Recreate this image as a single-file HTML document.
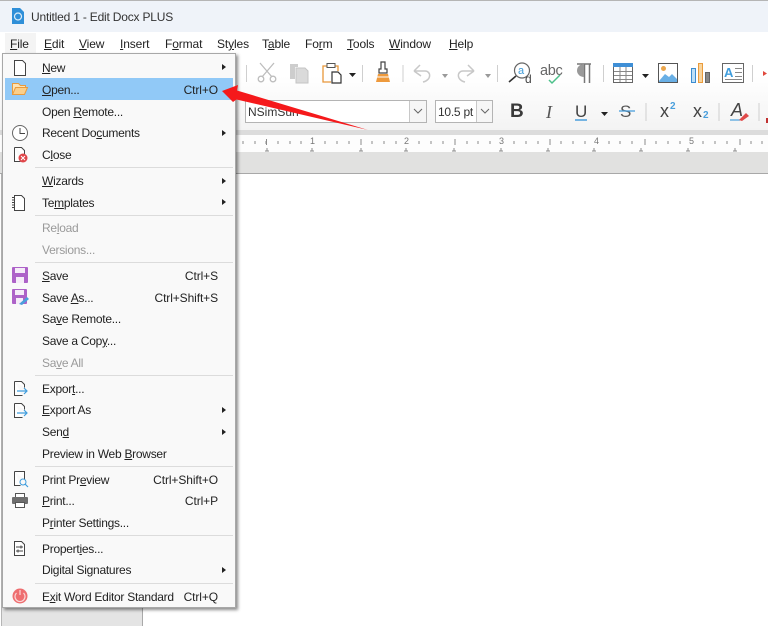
<!DOCTYPE html>
<html><head><meta charset="utf-8">
<style>
html,body{margin:0;padding:0;background:#fff}
body{width:768px;height:626px;position:relative;overflow:hidden;font-family:"Liberation Sans",sans-serif;font-size:12px;color:#222}
div,span.a{position:absolute;white-space:nowrap}
u{text-underline-offset:1px}
.m{top:37px;font-size:12px;line-height:14px;letter-spacing:-.12px;color:#222}
.i{left:42px;font-size:12px;line-height:14px;letter-spacing:-.27px;color:#222}
.s{right:550px;font-size:12px;line-height:14px;letter-spacing:-.1px;color:#222}
.d{color:#9a9a9a}
.sep{left:35px;width:198px;height:1px;background:#dcdcdc}
.ar{left:222px;width:0;height:0;border-left:4px solid #222;border-top:3.5px solid transparent;border-bottom:3.5px solid transparent}
svg{position:absolute;left:0;top:0}
</style></head><body>
<!-- window chrome -->
<div style="left:0;top:0;width:768px;height:32px;background:#eff3f9"></div>
<div style="left:0;top:0;width:768px;height:1px;background:#b5b5b5"></div>
<div style="left:0;top:32px;width:768px;height:98px;background:linear-gradient(#fff 0,#fff 45%,#f3f3f3 100%)"></div>
<div style="left:0;top:130px;width:768px;height:5px;background:#dcdcdc"></div>
<div style="left:0;top:135px;width:768px;height:17px;background:#fdfdfd"></div>
<div style="left:0;top:152px;width:768px;height:21px;background:#e1e1e0"></div>
<div style="left:0;top:173px;width:768px;height:1px;background:#a8a8a8"></div>
<div style="left:2px;top:174px;width:140px;height:452px;background:#e4e4e4"></div>
<div style="left:1px;top:174px;width:1px;height:452px;background:#b5b5b5"></div>
<div style="left:142px;top:174px;width:1px;height:452px;background:#a9a9a9"></div>
<div style="left:5px;top:33px;width:31px;height:21px;background:#f4f4f4"></div>

<div style="left:31px;top:9px;font-size:12px;line-height:16px;letter-spacing:-.2px;color:#333">Untitled 1 - Edit Docx PLUS</div>
<div class="m" style="left:10px"><u>F</u>ile</div>
<div class="m" style="left:44px"><u>E</u>dit</div>
<div class="m" style="left:79px"><u>V</u>iew</div>
<div class="m" style="left:120px"><u>I</u>nsert</div>
<div class="m" style="left:165px">F<u>o</u>rmat</div>
<div class="m" style="left:217px">St<u>y</u>les</div>
<div class="m" style="left:262px">T<u>a</u>ble</div>
<div class="m" style="left:305px">Fo<u>r</u>m</div>
<div class="m" style="left:347px"><u>T</u>ools</div>
<div class="m" style="left:389px"><u>W</u>indow</div>
<div class="m" style="left:449px"><u>H</u>elp</div>

<!-- font combos -->
<div style="left:245px;top:100px;width:182px;height:23px;background:#fff;border:1px solid #b4b4b4;box-sizing:border-box"></div>
<div style="left:409px;top:101px;width:17px;height:21px;background:#f6f6f6;border-left:1px solid #c8c8c8;box-sizing:border-box"></div>
<div style="left:248px;top:105px;font-size:12px;line-height:14px;color:#333">NSimSun</div>
<div style="left:435px;top:100px;width:58px;height:23px;background:#fff;border:1px solid #b4b4b4;box-sizing:border-box"></div>
<div style="left:476px;top:101px;width:16px;height:21px;background:#f6f6f6;border-left:1px solid #c8c8c8;box-sizing:border-box"></div>
<div style="left:438px;top:105px;font-size:12px;line-height:14px;letter-spacing:-.25px;color:#333">10.5 pt</div>
<div style="left:510px;top:101px;font:bold 19px/22px 'Liberation Sans',sans-serif;color:#3a3a3a">B</div>
<div style="left:546px;top:101px;font:italic 18px/22px 'Liberation Serif',serif;color:#555">I</div>
<div style="left:575px;top:102px;font-size:17px;line-height:20px;color:#444">U</div>
<div style="left:620px;top:102px;font-size:17px;line-height:20px;color:#555">S</div>
<div style="left:660px;top:100px;font-size:18px;line-height:22px;color:#444">x</div>
<div style="left:670px;top:101px;font:bold 10px/12px 'Liberation Sans',sans-serif;color:#4a9fdc">2</div>
<div style="left:693px;top:100px;font-size:18px;line-height:22px;color:#444">x</div>
<div style="left:703px;top:110px;font:bold 10px/12px 'Liberation Sans',sans-serif;color:#4a9fdc">2</div>
<div style="left:731px;top:100px;font:italic 18px/21px 'Liberation Sans',sans-serif;color:#444">A</div>

<!-- ruler digits -->
<div style="left:310px;top:136px;font-size:9px;line-height:11px;color:#777">1</div>
<div style="left:404px;top:136px;font-size:9px;line-height:11px;color:#777">2</div>
<div style="left:499px;top:136px;font-size:9px;line-height:11px;color:#777">3</div>
<div style="left:594px;top:136px;font-size:9px;line-height:11px;color:#777">4</div>
<div style="left:689px;top:136px;font-size:9px;line-height:11px;color:#777">5</div>

<svg width="768" height="626" viewBox="0 0 768 626" fill="none">
<!-- app icon -->
<path d="M12 8h8l4 4v12H12z" fill="#2f8fd8"/><circle cx="18" cy="16.500" r="3.500" stroke="#dcecf8" stroke-width="1.200"/>
<!-- toolbar separators -->
<g stroke="#cfcfcf" stroke-width="1">
<path d="M246.500 65v17M362.500 65v17M403 65v17M497.500 65v17M603.500 65v17M752.500 65v17M646 103v18M719 103v18M759 103v18"/>
</g>
<!-- scissors -->
<g stroke="#bdbdbd" stroke-width="1.300"><path d="M260 63l12 14M274 63l-12 14"/><circle cx="261" cy="79" r="2.800"/><circle cx="273" cy="79" r="2.800"/></g>
<!-- copy -->
<path d="M290 64h8v3h-3v12h-5z" fill="#cdcdcd"/><path d="M296 68h9l3 3v12h-12z" fill="#dadada" stroke="#c4c4c4"/>
<!-- paste -->
<path d="M327 66h-4v16h8" stroke="#e8973a" stroke-width="1.300"/><path d="M335 66h3v5" stroke="#e8973a" stroke-width="1.300"/><rect x="327" y="63.500" width="8" height="4" fill="#fff" stroke="#555"/><path d="M332 72h6l3 3v8h-9z" fill="#fff" stroke="#333" stroke-width="1.200"/>
<path d="M349 73h7l-3.500 4z" fill="#222"/>
<!-- clone brush -->
<path d="M381 62h4v7h2v4h-8v-4h2z" stroke="#444" stroke-width="1.200" fill="#fff"/><path d="M378 74h10l2 8h-14z" fill="#ee9a3d"/><path d="M376 77h14" stroke="#fff"/>
<!-- undo redo -->
<g stroke="#c8c8c8" stroke-width="1.500"><path d="M414 71l6-6M414 71l7 5M415 71h10c6 0 7 9-2 11"/><path d="M474 71l-6-6M474 71l-7 5M473 71h-10c-6 0-7 9 2 11"/></g>
<path d="M442 74h6l-3 4zM485 74h6l-3 4z" fill="#9a9a9a"/>
<!-- find -->
<circle cx="522" cy="70.500" r="7.500" stroke="#666" stroke-width="1.200"/><path d="M516 76l-7 6" stroke="#333" stroke-width="1.600"/>
<text x="518" y="74" font-family="Liberation Sans" font-size="11" fill="#3d9ad8">a</text>
<text x="525" y="83" font-family="Liberation Sans" font-size="12" fill="#444">d</text>
<!-- spell check -->
<text x="540" y="75" font-family="Liberation Sans" font-size="14.500" fill="#666" letter-spacing="-.3">abc</text>
<path d="M549 80l3 3 8-8" stroke="#4cc08a" stroke-width="1.500"/>
<!-- pilcrow -->
<path d="M577 64h14M584.500 64v19M589.500 64v19" stroke="#777" stroke-width="1.500"/><path d="M584 64a7 6.500 0 0 0 0 13z" fill="#999"/>
<!-- table -->
<rect x="613.500" y="63.500" width="19" height="19" fill="#fff" stroke="#666"/><rect x="613" y="63" width="20" height="4" fill="#3f8fd6"/><path d="M614 71.500h18M614 75.500h18M614 79.500h18M620 67v15M626 67v15" stroke="#888"/>
<path d="M642 74h7l-3.500 4z" fill="#222"/>
<!-- image -->
<rect x="658.500" y="63.500" width="19" height="19" fill="#fff" stroke="#555"/><circle cx="663.500" cy="68.500" r="2.500" fill="#eba64c"/><path d="M659 81l6-7 4 3 3-3 5 5v3h-18z" fill="#69afe5"/>
<!-- chart -->
<rect x="691.500" y="68.500" width="4" height="14" fill="#bfe0f7" stroke="#3c8cd0"/><rect x="698.500" y="63.500" width="4" height="19" fill="#f8d59f" stroke="#ea9b3c"/><rect x="705.500" y="72.500" width="4" height="10" fill="#888" stroke="#666"/>
<!-- textbox -->
<rect x="722.500" y="63.500" width="21" height="19" fill="#fff" stroke="#666"/><path d="M735 68.500h7M735 72.500h7M735 76.500h7M725 79.500h17" stroke="#888"/>
<text x="724" y="77" font-family="Liberation Sans" font-size="13" font-weight="bold" fill="#3f9ddd">A</text>
<path d="M763 71l4 2.500-4 2.500z" fill="#e0483c"/>
<!-- bottom row extras -->
<path d="M575 120h12" stroke="#4a9fdc" stroke-width="1.500"/>
<path d="M601 112h7l-3.500 4z" fill="#222"/>
<path d="M619 111h16" stroke="#4a9fdc" stroke-width="1.300"/>
<path d="M730 120h10" stroke="#4a9fdc" stroke-width="1.200"/><path d="M739 120l7-7 3 3-7 5z" fill="#e04a4a"/>
<path d="M767 118v5" stroke="#c03030" stroke-width="2"/>
<!-- combo chevrons -->
<path d="M414 109l4 4 4-4M481 109l4 4 4-4" stroke="#666"/>
<!-- ruler ticks -->
<g stroke="#8a8a8a" stroke-width="1">
<path d="M243 141v3M255 141v3M266 141v3M278 141v3M290 141v3M301 141v3M325 141v3M337 141v3M349 141v3M372 141v3M384 141v3M396 141v3M419 141v3M431 141v3M443 141v3M467 141v3M478 141v3M490 141v3M514 141v3M526 141v3M538 141v3M561 141v3M573 141v3M585 141v3M609 141v3M620 141v3M632 141v3M656 141v3M668 141v3M680 141v3M703 141v3M715 141v3M727 141v3M751 141v3M762 141v3"/>
<path d="M266.500 139v6M361 139v6M455 139v6M550 139v6M645 139v6M740 139v6"/>
<path d="M265 151h4M267 148v3M310 151h4M312 148v3M359 151h4M361 148v3M404 151h4M406 148v3M452 151h4M454 148v3M499 151h4M501 148v3M546 151h4M548 148v3M592 151h4M594 148v3M639 151h4M641 148v3M686 151h4M688 148v3M733 151h4M735 148v3"/>
</g>
</svg>

<!-- menu -->
<div style="left:2px;top:53px;width:234px;height:555px;background:#f9f9f9;border:1px solid #a8a8a8;box-sizing:border-box;box-shadow:2px 2px 3px rgba(0,0,0,.45)"></div>
<div style="left:5px;top:78px;width:228px;height:22px;background:#91c9f7"></div>

<div class="i" style="top:61px"><u>N</u>ew</div><div class="ar" style="top:64px"></div>
<div class="i" style="top:83px"><u>O</u>pen...</div><div class="s" style="top:83px">Ctrl+O</div>
<div class="i" style="top:105px">Open <u>R</u>emote...</div>
<div class="i" style="top:126px">Recent Do<u>c</u>uments</div><div class="ar" style="top:130px"></div>
<div class="i" style="top:148px">C<u>l</u>ose</div>
<div class="sep" style="top:167px"></div>
<div class="i" style="top:174px"><u>W</u>izards</div><div class="ar" style="top:178px"></div>
<div class="i" style="top:196px">Te<u>m</u>plates</div><div class="ar" style="top:199px"></div>
<div class="sep" style="top:215px"></div>
<div class="i d" style="top:221px">Re<u>l</u>oad</div>
<div class="i d" style="top:243px">Versions...</div>
<div class="sep" style="top:262px"></div>
<div class="i" style="top:269px"><u>S</u>ave</div><div class="s" style="top:269px">Ctrl+S</div>
<div class="i" style="top:291px">Save <u>A</u>s...</div><div class="s" style="top:291px">Ctrl+Shift+S</div>
<div class="i" style="top:312px">Sa<u>v</u>e Remote...</div>
<div class="i" style="top:334px">Save a Cop<u>y</u>...</div>
<div class="i d" style="top:356px">Sa<u>v</u>e All</div>
<div class="sep" style="top:375px"></div>
<div class="i" style="top:382px">Expor<u>t</u>...</div>
<div class="i" style="top:403px"><u>E</u>xport As</div><div class="ar" style="top:407px"></div>
<div class="i" style="top:425px">Sen<u>d</u></div><div class="ar" style="top:429px"></div>
<div class="i" style="top:447px">Preview in Web <u>B</u>rowser</div>
<div class="sep" style="top:466px"></div>
<div class="i" style="top:473px">Print Pr<u>e</u>view</div><div class="s" style="top:473px">Ctrl+Shift+O</div>
<div class="i" style="top:494px"><u>P</u>rint...</div><div class="s" style="top:494px">Ctrl+P</div>
<div class="i" style="top:516px">P<u>r</u>inter Settings...</div>
<div class="sep" style="top:535px"></div>
<div class="i" style="top:542px">Propert<u>i</u>es...</div>
<div class="i" style="top:563px">Digital Signatures</div><div class="ar" style="top:567px"></div>
<div class="sep" style="top:583px"></div>
<div class="i" style="top:590px">E<u>x</u>it Word Editor Standard</div><div class="s" style="top:590px">Ctrl+Q</div>

<svg width="768" height="626" viewBox="0 0 768 626" fill="none">
<!-- New -->
<path d="M14.500 60.500h8l3 3v12h-11z" fill="#fff" stroke="#444"/>
<!-- Open -->
<path d="M12.500 94.500v-11h6l2 2h5v2" fill="#fde3b5" stroke="#ea9b3c"/><path d="M12.500 94.500l3-7h12l-3 7z" fill="#fbcf8a" stroke="#ea9b3c"/>
<!-- Recent -->
<circle cx="20" cy="133" r="7.500" fill="#fff" stroke="#666"/><path d="M20 128v5.500h5" stroke="#444"/>
<!-- Close -->
<path d="M14.500 147.500h7l3 3v5M14.500 147.500v14h6" stroke="#444" fill="#fff"/><circle cx="23" cy="158" r="4.500" fill="#e0464a"/><path d="M21 156l4 4M25 156l-4 4" stroke="#fff"/>
<!-- Templates -->
<path d="M14.500 195.500h7l3 3v12h-10z" fill="#fff" stroke="#444"/><path d="M13 197v12" stroke="#444" stroke-dasharray="1 1.500" stroke-width="2"/>
<!-- Save -->
<rect x="12" y="267" width="16" height="16" rx="1" fill="#ad62c8"/><rect x="15" y="268" width="10" height="5" fill="#f5ecf8"/><rect x="16" y="277" width="8" height="6" fill="#f5ecf8"/>
<!-- Save As -->
<rect x="12" y="289" width="15" height="15" rx="1" fill="#ad62c8"/><rect x="15" y="290" width="9" height="5" fill="#f5ecf8"/><rect x="16" y="298" width="7" height="6" fill="#f5ecf8"/><path d="M19 304l8-7 2 2-7 6z" fill="#4a9fdc"/>
<!-- Export -->
<path d="M14.500 381.500h7l3 3v3M14.500 381.500v14h8" stroke="#444" fill="#fff"/><path d="M17 391h10M24 388l3 3-3 3" stroke="#3f9ddd" stroke-width="1.200"/>
<path d="M14.500 403.500h7l3 3v3M14.500 403.500v14h8" stroke="#444" fill="#fff"/><path d="M17 413h10M24 410l3 3-3 3" stroke="#3f9ddd" stroke-width="1.200"/>
<!-- Print Preview -->
<path d="M14.500 471.500h10v8M14.500 471.500v14h6" stroke="#444" fill="#fff"/><circle cx="23" cy="482" r="3" stroke="#3f9ddd"/><path d="M25 484l3 3" stroke="#3f9ddd" stroke-width="1.200"/>
<!-- Print -->
<rect x="15.500" y="493.500" width="9" height="5" fill="#fff" stroke="#555"/><rect x="12" y="497" width="16" height="7" rx="1" fill="#6e6e6e"/><rect x="15.500" y="502.500" width="9" height="5" fill="#fff" stroke="#555"/>
<!-- Properties -->
<path d="M14.500 541.500h7l3 3v11h-10z" fill="#fff" stroke="#444"/><path d="M16 547h7M16 551h7" stroke="#444"/><path d="M21 545.500v3M18 549.500v3" stroke="#444"/>
<!-- Exit -->
<circle cx="20" cy="596" r="7.500" fill="#ee6e70"/><path d="M16.500 593a5 5 0 1 0 7 0" stroke="#fbd7d7" stroke-width="1.200"/><path d="M20 590v5" stroke="#fbd7d7" stroke-width="1.200"/>
<!-- Red arrow -->
<path d="M222 91L238 85L237 90.500L368 130L236.500 99.500L233 102Z" fill="#f5191b"/>
</svg>
</body></html>
